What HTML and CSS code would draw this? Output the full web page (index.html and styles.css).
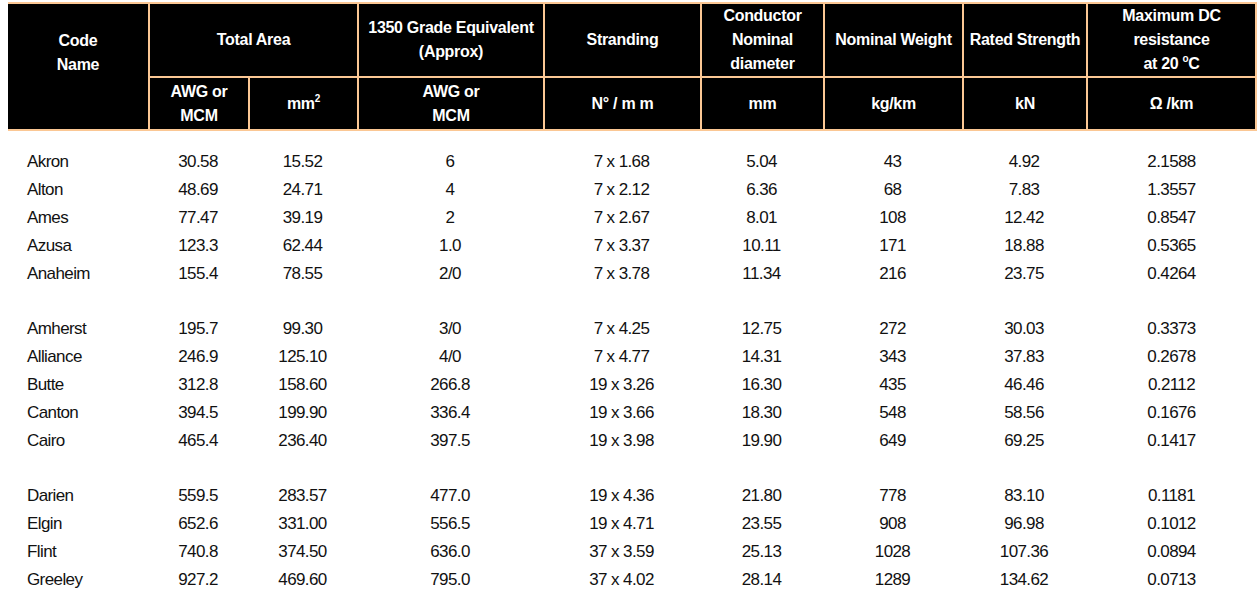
FILE: index.html
```html
<!DOCTYPE html>
<html lang="en">
<head>
<meta charset="utf-8">
<title>Conductor data</title>
<link rel="stylesheet" href="styles.css">
</head>
<body>
<table class="spec">
  <colgroup>
    <col class="c1"><col class="c2"><col class="c3"><col class="c4"><col class="c5"><col class="c6"><col class="c7"><col class="c8"><col class="c9">
  </colgroup>
  <thead>
    <tr class="h1">
      <th rowspan="2" class="code">Code<br>Name</th>
      <th colspan="2">Total Area</th>
      <th>1350 Grade Equivalent<br>(Approx)</th>
      <th>Stranding</th>
      <th>Conductor<br>Nominal<br>diameter</th>
      <th>Nominal Weight</th>
      <th>Rated Strength</th>
      <th class="last">Maximum DC<br>resistance<br>at 20 <sup>o</sup>C</th>
    </tr>
    <tr class="h2">
      <th>AWG or<br>MCM</th>
      <th>mm<sup>2</sup></th>
      <th>AWG or<br>MCM</th>
      <th>N° / m m</th>
      <th>mm</th>
      <th>kg/km</th>
      <th>kN</th>
      <th class="last">Ω /km</th>
    </tr>
  </thead>
  <tbody>
    <tr class="spacer"><td colspan="9"></td></tr>
    <tr><td class="name">Akron</td><td>30.58</td><td>15.52</td><td>6</td><td>7 x 1.68</td><td>5.04</td><td>43</td><td>4.92</td><td>2.1588</td></tr>
    <tr><td class="name">Alton</td><td>48.69</td><td>24.71</td><td>4</td><td>7 x 2.12</td><td>6.36</td><td>68</td><td>7.83</td><td>1.3557</td></tr>
    <tr><td class="name">Ames</td><td>77.47</td><td>39.19</td><td>2</td><td>7 x 2.67</td><td>8.01</td><td>108</td><td>12.42</td><td>0.8547</td></tr>
    <tr><td class="name">Azusa</td><td>123.3</td><td>62.44</td><td>1.0</td><td>7 x 3.37</td><td>10.11</td><td>171</td><td>18.88</td><td>0.5365</td></tr>
    <tr><td class="name">Anaheim</td><td>155.4</td><td>78.55</td><td>2/0</td><td>7 x 3.78</td><td>11.34</td><td>216</td><td>23.75</td><td>0.4264</td></tr>
    <tr class="gap"><td colspan="9"></td></tr>
    <tr><td class="name">Amherst</td><td>195.7</td><td>99.30</td><td>3/0</td><td>7 x 4.25</td><td>12.75</td><td>272</td><td>30.03</td><td>0.3373</td></tr>
    <tr><td class="name">Alliance</td><td>246.9</td><td>125.10</td><td>4/0</td><td>7 x 4.77</td><td>14.31</td><td>343</td><td>37.83</td><td>0.2678</td></tr>
    <tr><td class="name">Butte</td><td>312.8</td><td>158.60</td><td>266.8</td><td>19 x 3.26</td><td>16.30</td><td>435</td><td>46.46</td><td>0.2112</td></tr>
    <tr><td class="name">Canton</td><td>394.5</td><td>199.90</td><td>336.4</td><td>19 x 3.66</td><td>18.30</td><td>548</td><td>58.56</td><td>0.1676</td></tr>
    <tr><td class="name">Cairo</td><td>465.4</td><td>236.40</td><td>397.5</td><td>19 x 3.98</td><td>19.90</td><td>649</td><td>69.25</td><td>0.1417</td></tr>
    <tr class="gap"><td colspan="9"></td></tr>
    <tr><td class="name">Darien</td><td>559.5</td><td>283.57</td><td>477.0</td><td>19 x 4.36</td><td>21.80</td><td>778</td><td>83.10</td><td>0.1181</td></tr>
    <tr><td class="name">Elgin</td><td>652.6</td><td>331.00</td><td>556.5</td><td>19 x 4.71</td><td>23.55</td><td>908</td><td>96.98</td><td>0.1012</td></tr>
    <tr><td class="name">Flint</td><td>740.8</td><td>374.50</td><td>636.0</td><td>37 x 3.59</td><td>25.13</td><td>1028</td><td>107.36</td><td>0.0894</td></tr>
    <tr><td class="name">Greeley</td><td>927.2</td><td>469.60</td><td>795.0</td><td>37 x 4.02</td><td>28.14</td><td>1289</td><td>134.62</td><td>0.0713</td></tr>
  </tbody>
</table>
</body>
</html>
```

FILE: styles.css
```css
html, body {
  margin: 0;
  padding: 0;
  background: #ffffff;
}

.spec {
  margin: 2px 0 0 8px;
  width: 1249px;
  table-layout: fixed;
  border-collapse: separate;
  border-spacing: 0;
  font-family: "Liberation Sans", Arial, sans-serif;
  color: #111111;
}

.c1 { width: 140px; }
.c2 { width: 100px; }
.c3 { width: 109px; }
.c4 { width: 186px; }
.c5 { width: 157px; }
.c6 { width: 123px; }
.c7 { width: 139px; }
.c8 { width: 124px; }
.c9 { width: 171px; }

.spec th {
  background: #000000;
  color: #ffffff;
  font-weight: bold;
  font-size: 16px;
  letter-spacing: -0.3px;
  line-height: 24px;
  padding: 0;
  text-align: center;
  vertical-align: middle;
  border-left: 2px solid #fbc794;
  border-bottom: 2px solid #fbc794;
}

.h1 th {
  border-top: 2px solid #fbc794;
  height: 72px;
}

.h2 th {
  height: 51px;
}

.spec th.code {
  border-left: none;
  vertical-align: top;
  padding-top: 25px;
}

.spec th.last {
  border-right: 2px solid #fbc794;
}

.spec sup {
  font-size: 10px;
  line-height: 0;
  vertical-align: 7px;
}

.spec td {
  font-size: 17px;
  letter-spacing: -0.6px;
  height: 27.87px;
  line-height: 27.87px;
  padding: 0;
  text-align: center;
  vertical-align: middle;
  white-space: nowrap;
}

.spec td.name {
  text-align: left;
  padding-left: 19px;
}

.spec tr.spacer td {
  height: 17px;
  line-height: 17px;
}

.spec tr.gap td {
  height: 27.87px;
}
```
